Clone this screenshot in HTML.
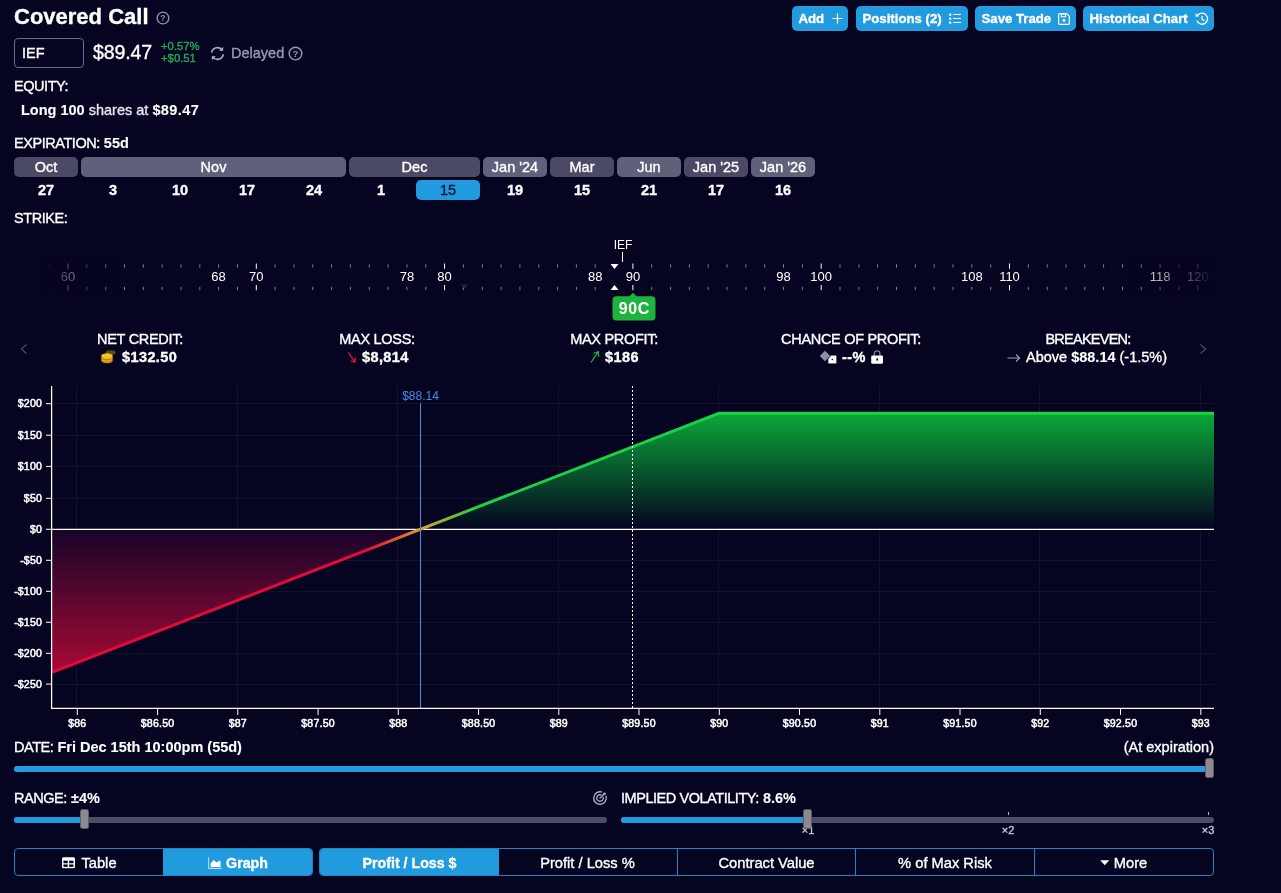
<!DOCTYPE html>
<html lang="en"><head><meta charset="utf-8"><title>Covered Call</title>
<style>
html,body{margin:0;padding:0;background:#050421;}
body{width:1281px;height:893px;position:relative;overflow:hidden;font-family:"Liberation Sans",sans-serif;color:#fff;font-size:14px;-webkit-text-stroke:0.35px currentColor;}
.t{position:absolute;white-space:nowrap;line-height:1;transform:translateY(-50%);margin-top:-1px}
.c{position:absolute;white-space:nowrap;line-height:1;transform:translate(-50%,-50%);text-align:center;margin-top:-1px}
.cap{letter-spacing:-0.45px}
.r{position:absolute;white-space:nowrap;line-height:1;transform:translate(-100%,-50%);margin-top:-1px}
b{font-weight:700;-webkit-text-stroke:0.1px currentColor}
.btn{position:absolute;top:6px;height:25px;background:#219ade;border-radius:5px;box-sizing:border-box;}
.btn span{position:absolute;left:6.5px;top:12.5px;transform:translateY(-50%);font-weight:700;font-size:13.2px;line-height:1;white-space:nowrap;}
.btn svg{position:absolute;top:5px;}
.pill{position:absolute;top:157px;height:19.700px;background:#5f6079;border-radius:5px;}
.pill.dk{background:#4a4a64}
.pill span{position:absolute;left:50%;top:9.5px;transform:translate(-50%,-50%);font-size:14.5px;line-height:1;white-space:nowrap;}
.d{position:absolute;top:189.5px;transform:translate(-50%,-50%);font-weight:700;font-size:14.5px;line-height:1;}
.abs{position:absolute;}
.seg{position:absolute;top:0;height:26px;box-sizing:border-box;}
.seg span{position:absolute;left:50%;top:13.500px;transform:translate(-50%,-50%);font-size:14.700px;line-height:1;white-space:nowrap;}
.seg.on{background:#219ade;}
.seg.on span{font-weight:700;font-size:14.200px}
.grp{position:absolute;top:848px;height:28px;border:1px solid #1e84c2;border-radius:4px;box-sizing:border-box;overflow:hidden;}
</style></head><body><div id="app" style="position:absolute;left:0;top:0;width:1281px;height:893px;will-change:transform">

<div class="t" style="left:14px;top:17.5px;font-size:22px;font-weight:700;letter-spacing:0">Covered Call</div>
<svg class="abs" style="left:156px;top:10.500px" width="14" height="14" viewBox="0 0 12 12"><circle cx="6" cy="6" r="5" fill="none" stroke="#8f90a6" stroke-width="1.2"/><text x="6" y="8.6" font-size="7.5" font-weight="700" text-anchor="middle" fill="#8f90a6" font-family="Liberation Sans, sans-serif">?</text></svg>
<div class="btn" style="left:792px;width:56px"><span>Add</span><svg style="left:38px" width="15" height="15" viewBox="0 0 15 15"><path d="M7.5 2.5v10M2.5 7.5h10" stroke="#fff" stroke-width="1.2" fill="none"/></svg></div>
<div class="btn" style="left:856px;width:112px"><span>Positions (2)</span><svg style="left:92px" width="15" height="15" viewBox="0 0 15 15"><path d="M5 3.5h8M5 7.5h8M5 11.5h8" stroke="#fff" stroke-width="1.2" fill="none"/><rect x="1" y="2.400" width="2.300" height="2.300" rx="0.600" fill="#fff"/><rect x="1" y="6.400" width="2.300" height="2.300" rx="0.600" fill="#fff"/><rect x="1" y="10.400" width="2.300" height="2.300" rx="0.600" fill="#fff"/></svg></div>
<div class="btn" style="left:975px;width:101px"><span>Save Trade</span><svg style="left:81px;top:4.700px" width="16" height="16" viewBox="0 0 15 15"><path d="M2.5 3.5a1 1 0 0 1 1-1h6.5l2.5 2.5v6.5a1 1 0 0 1-1 1h-8a1 1 0 0 1-1-1z" stroke="#fff" stroke-width="1.1" fill="none"/><rect x="5" y="2.8" width="4" height="2.6" fill="none" stroke="#fff" stroke-width="1"/><circle cx="7.5" cy="9" r="1.4" fill="#fff"/></svg></div>
<div class="btn" style="left:1083px;width:131px"><span>Historical Chart</span><svg style="left:110.500px;top:4.700px" width="16" height="16" viewBox="0 0 15 15"><path d="M3.2 4.2A5.2 5.2 0 1 1 2.6 9" stroke="#fff" stroke-width="1.2" fill="none"/><path d="M1.2 2.2l0.6 3.4 3.3-0.8z" fill="#fff"/><path d="M7.6 4.6v3.2l2.1 1.3" stroke="#fff" stroke-width="1.1" fill="none"/></svg></div>
<div class="abs" style="left:14px;top:38px;width:70px;height:30px;border:1px solid #6a6c88;border-radius:4px;box-sizing:border-box"></div>
<div class="t" style="left:22px;top:53.5px;font-size:14.5px">IEF</div>
<div class="t" style="left:93px;top:53.500px;font-size:19.600px;letter-spacing:-0.150px">$89.47</div>
<div class="t" style="left:161px;top:48px;font-size:11.3px;color:#25ab57">+0.57%</div>
<div class="t" style="left:161px;top:59.800px;font-size:11.3px;color:#25ab57">+$0.51</div>
<svg class="abs" style="left:208.500px;top:44.500px" width="17" height="17" viewBox="0 0 14 14"><path d="M2.200 6.200A4.900 4.900 0 0 1 11 4.200" stroke="#adaec6" stroke-width="1.300" fill="none"/><path d="M11.800 7.800A4.900 4.900 0 0 1 3 9.800" stroke="#adaec6" stroke-width="1.300" fill="none"/><path d="M11.700 1.400v3.400h-3.400z" fill="#adaec6"/><path d="M2.300 12.600v-3.400h3.400z" fill="#adaec6"/></svg>
<div class="t" style="left:231px;top:53.500px;font-size:14.500px;color:#9799b5">Delayed</div>
<svg class="abs" style="left:287.500px;top:45.700px" width="15" height="15" viewBox="0 0 14 14"><circle cx="7" cy="7" r="5.900" fill="none" stroke="#9799b5" stroke-width="1.300"/><text x="7" y="10" font-size="8.500" font-weight="700" text-anchor="middle" fill="#9799b5" font-family="Liberation Sans, sans-serif">?</text></svg>
<div class="t" style="left:14px;top:86.5px;font-size:14.5px;letter-spacing:-0.45px">EQUITY:</div>
<div class="t" style="left:21px;top:110.5px;font-size:14.5px"><b>Long 100</b> <span style="color:#e4e4ee">shares at</span> <b style="letter-spacing:0.4px">$89.47</b></div>
<div class="t" style="left:14px;top:143.5px;font-size:14.5px"><span class="cap">EXPIRATION:</span> <b>55d</b></div>
<div class="pill dk" style="left:14px;width:64px"><span>Oct</span></div>
<div class="pill" style="left:81px;width:265px"><span>Nov</span></div>
<div class="pill dk" style="left:349px;width:131px"><span>Dec</span></div>
<div class="pill" style="left:483px;width:64px"><span>Jan '24</span></div>
<div class="pill dk" style="left:550px;width:64px"><span>Mar</span></div>
<div class="pill" style="left:617px;width:64px"><span>Jun</span></div>
<div class="pill dk" style="left:684px;width:64px"><span>Jan '25</span></div>
<div class="pill" style="left:751px;width:64px"><span>Jan '26</span></div>
<div class="abs" style="left:416px;top:180px;width:64px;height:20px;background:#219ade;border-radius:5px"></div>
<div class="d" style="left:46.0px">27</div>
<div class="d" style="left:113.0px">3</div>
<div class="d" style="left:180.0px">10</div>
<div class="d" style="left:247.0px">17</div>
<div class="d" style="left:314.0px">24</div>
<div class="d" style="left:381.0px">1</div>
<div class="d" style="left:448.0px;font-weight:400;color:#0b1a3a">15</div>
<div class="d" style="left:515.0px">19</div>
<div class="d" style="left:582.0px">15</div>
<div class="d" style="left:649.0px">21</div>
<div class="d" style="left:716.0px">17</div>
<div class="d" style="left:783.0px">16</div>
<div class="t" style="left:14px;top:218.5px;font-size:14.5px;letter-spacing:-0.45px">STRIKE:</div>
<svg class="abs" style="left:0;top:230px" width="1281" height="100" viewBox="0 230 1281 100"><defs><linearGradient id="fade" x1="0" x2="1" y1="0" y2="0"><stop offset="0" stop-color="#050421" stop-opacity="1"/><stop offset="0.07" stop-color="#050421" stop-opacity="0"/><stop offset="0.93" stop-color="#050421" stop-opacity="0"/><stop offset="1" stop-color="#050421" stop-opacity="1"/></linearGradient></defs><path d="M49.2 264.300v3.400M49.2 286.800v3.400" stroke="#7c7c95" stroke-width="1"/><path d="M68.0 263.500v5.300M68.0 285v5.300" stroke="#fff" stroke-width="1"/><path d="M86.8 264.300v3.400M86.8 286.800v3.400" stroke="#7c7c95" stroke-width="1"/><path d="M105.7 264.300v3.400M105.7 286.800v3.400" stroke="#7c7c95" stroke-width="1"/><path d="M124.5 264.300v3.400M124.5 286.800v3.400" stroke="#7c7c95" stroke-width="1"/><path d="M143.3 264.300v3.400M143.3 286.800v3.400" stroke="#7c7c95" stroke-width="1"/><path d="M162.1 264.300v3.400M162.1 286.800v3.400" stroke="#7c7c95" stroke-width="1"/><path d="M181.0 264.300v3.400M181.0 286.800v3.400" stroke="#7c7c95" stroke-width="1"/><path d="M199.8 264.300v3.400M199.8 286.800v3.400" stroke="#7c7c95" stroke-width="1"/><path d="M218.6 264.300v3.400M218.6 286.800v3.400" stroke="#7c7c95" stroke-width="1"/><path d="M237.5 264.300v3.400M237.5 286.800v3.400" stroke="#7c7c95" stroke-width="1"/><path d="M256.3 263.500v5.300M256.3 285v5.300" stroke="#fff" stroke-width="1"/><path d="M275.1 264.300v3.400M275.1 286.800v3.400" stroke="#7c7c95" stroke-width="1"/><path d="M294.0 264.300v3.400M294.0 286.800v3.400" stroke="#7c7c95" stroke-width="1"/><path d="M312.8 264.300v3.400M312.8 286.800v3.400" stroke="#7c7c95" stroke-width="1"/><path d="M331.6 264.300v3.400M331.6 286.800v3.400" stroke="#7c7c95" stroke-width="1"/><path d="M350.4 264.300v3.400M350.4 286.800v3.400" stroke="#7c7c95" stroke-width="1"/><path d="M369.3 264.300v3.400M369.3 286.800v3.400" stroke="#7c7c95" stroke-width="1"/><path d="M388.1 264.300v3.400M388.1 286.800v3.400" stroke="#7c7c95" stroke-width="1"/><path d="M406.9 264.300v3.400M406.9 286.800v3.400" stroke="#7c7c95" stroke-width="1"/><path d="M425.8 264.300v3.400M425.8 286.800v3.400" stroke="#7c7c95" stroke-width="1"/><path d="M444.6 263.500v5.300M444.6 285v5.300" stroke="#fff" stroke-width="1"/><path d="M463.4 264.300v3.400M463.4 286.800v3.400" stroke="#7c7c95" stroke-width="1"/><path d="M482.3 264.300v3.400M482.3 286.800v3.400" stroke="#7c7c95" stroke-width="1"/><path d="M501.1 264.300v3.400M501.1 286.800v3.400" stroke="#7c7c95" stroke-width="1"/><path d="M519.9 264.300v3.400M519.9 286.800v3.400" stroke="#7c7c95" stroke-width="1"/><path d="M538.8 264.300v3.400M538.8 286.800v3.400" stroke="#7c7c95" stroke-width="1"/><path d="M557.6 264.300v3.400M557.6 286.800v3.400" stroke="#7c7c95" stroke-width="1"/><path d="M576.4 264.300v3.400M576.4 286.800v3.400" stroke="#7c7c95" stroke-width="1"/><path d="M595.2 264.300v3.400M595.2 286.800v3.400" stroke="#7c7c95" stroke-width="1"/><path d="M614.1 264.300v3.400M614.1 286.800v3.400" stroke="#7c7c95" stroke-width="1"/><path d="M632.9 263.500v5.300M632.9 285v5.300" stroke="#fff" stroke-width="1"/><path d="M651.7 264.300v3.400M651.7 286.800v3.400" stroke="#7c7c95" stroke-width="1"/><path d="M670.6 264.300v3.400M670.6 286.800v3.400" stroke="#7c7c95" stroke-width="1"/><path d="M689.4 264.300v3.400M689.4 286.800v3.400" stroke="#7c7c95" stroke-width="1"/><path d="M708.2 264.300v3.400M708.2 286.800v3.400" stroke="#7c7c95" stroke-width="1"/><path d="M727.0 264.300v3.400M727.0 286.800v3.400" stroke="#7c7c95" stroke-width="1"/><path d="M745.9 264.300v3.400M745.9 286.800v3.400" stroke="#7c7c95" stroke-width="1"/><path d="M764.7 264.300v3.400M764.7 286.800v3.400" stroke="#7c7c95" stroke-width="1"/><path d="M783.5 264.300v3.400M783.5 286.800v3.400" stroke="#7c7c95" stroke-width="1"/><path d="M802.4 264.300v3.400M802.4 286.800v3.400" stroke="#7c7c95" stroke-width="1"/><path d="M821.2 263.500v5.300M821.2 285v5.300" stroke="#fff" stroke-width="1"/><path d="M840.0 264.300v3.400M840.0 286.800v3.400" stroke="#7c7c95" stroke-width="1"/><path d="M858.9 264.300v3.400M858.9 286.800v3.400" stroke="#7c7c95" stroke-width="1"/><path d="M877.7 264.300v3.400M877.7 286.800v3.400" stroke="#7c7c95" stroke-width="1"/><path d="M896.5 264.300v3.400M896.5 286.800v3.400" stroke="#7c7c95" stroke-width="1"/><path d="M915.3 264.300v3.400M915.3 286.800v3.400" stroke="#7c7c95" stroke-width="1"/><path d="M934.2 264.300v3.400M934.2 286.800v3.400" stroke="#7c7c95" stroke-width="1"/><path d="M953.0 264.300v3.400M953.0 286.800v3.400" stroke="#7c7c95" stroke-width="1"/><path d="M971.8 264.300v3.400M971.8 286.800v3.400" stroke="#7c7c95" stroke-width="1"/><path d="M990.7 264.300v3.400M990.7 286.800v3.400" stroke="#7c7c95" stroke-width="1"/><path d="M1009.5 263.500v5.300M1009.5 285v5.300" stroke="#fff" stroke-width="1"/><path d="M1028.3 264.300v3.400M1028.3 286.800v3.400" stroke="#7c7c95" stroke-width="1"/><path d="M1047.2 264.300v3.400M1047.2 286.800v3.400" stroke="#7c7c95" stroke-width="1"/><path d="M1066.0 264.300v3.400M1066.0 286.800v3.400" stroke="#7c7c95" stroke-width="1"/><path d="M1084.8 264.300v3.400M1084.8 286.800v3.400" stroke="#7c7c95" stroke-width="1"/><path d="M1103.6 264.300v3.400M1103.6 286.800v3.400" stroke="#7c7c95" stroke-width="1"/><path d="M1122.5 264.300v3.400M1122.5 286.800v3.400" stroke="#7c7c95" stroke-width="1"/><path d="M1141.3 264.300v3.400M1141.3 286.800v3.400" stroke="#7c7c95" stroke-width="1"/><path d="M1160.1 264.300v3.400M1160.1 286.800v3.400" stroke="#7c7c95" stroke-width="1"/><path d="M1179.0 264.300v3.400M1179.0 286.800v3.400" stroke="#7c7c95" stroke-width="1"/><path d="M1197.8 263.500v5.300M1197.8 285v5.300" stroke="#fff" stroke-width="1"/><text x="68.0" y="281.300" font-size="13" text-anchor="middle" fill="#fff" font-family="Liberation Sans, sans-serif">60</text><text x="218.6" y="281.300" font-size="13" text-anchor="middle" fill="#fff" font-family="Liberation Sans, sans-serif">68</text><text x="256.3" y="281.300" font-size="13" text-anchor="middle" fill="#fff" font-family="Liberation Sans, sans-serif">70</text><text x="406.9" y="281.300" font-size="13" text-anchor="middle" fill="#fff" font-family="Liberation Sans, sans-serif">78</text><text x="444.6" y="281.300" font-size="13" text-anchor="middle" fill="#fff" font-family="Liberation Sans, sans-serif">80</text><text x="595.2" y="281.300" font-size="13" text-anchor="middle" fill="#fff" font-family="Liberation Sans, sans-serif">88</text><text x="632.9" y="281.300" font-size="13" text-anchor="middle" fill="#fff" font-family="Liberation Sans, sans-serif">90</text><text x="783.5" y="281.300" font-size="13" text-anchor="middle" fill="#fff" font-family="Liberation Sans, sans-serif">98</text><text x="821.2" y="281.300" font-size="13" text-anchor="middle" fill="#fff" font-family="Liberation Sans, sans-serif">100</text><text x="971.8" y="281.300" font-size="13" text-anchor="middle" fill="#fff" font-family="Liberation Sans, sans-serif">108</text><text x="1009.5" y="281.300" font-size="13" text-anchor="middle" fill="#fff" font-family="Liberation Sans, sans-serif">110</text><text x="1160.1" y="281.300" font-size="13" text-anchor="middle" fill="#fff" font-family="Liberation Sans, sans-serif">118</text><text x="1197.8" y="281.300" font-size="13" text-anchor="middle" fill="#fff" font-family="Liberation Sans, sans-serif">120</text><rect x="40" y="255" width="1175" height="42" fill="url(#fade)"/><path d="M461 284.500h7l-3.500 4.500z" fill="#26263f"/><text x="623" y="249" font-size="12" text-anchor="middle" fill="#fff" font-family="Liberation Sans, sans-serif">IEF</text><path d="M622.5 252v10" stroke="#fff" stroke-width="1"/><path d="M610.5 264h8l-4 5z" fill="#fff"/><path d="M610.5 290h8l-4 -5z" fill="#fff"/><path d="M616.500 296.300h13l3.500 -3.500 3.500 3.500h15a4 4 0 0 1 4 4v16.200a4 4 0 0 1 -4 4h-35a4 4 0 0 1 -4 -4v-16.200a4 4 0 0 1 4 -4z" fill="#1db33f"/><text x="634.300" y="313.800" font-size="16" letter-spacing="0.6" font-weight="700" text-anchor="middle" fill="#fff" font-family="Liberation Sans, sans-serif">90C</text></svg>
<svg class="abs" style="left:18px;top:342px" width="12" height="14" viewBox="0 0 12 14"><path d="M8.500 2.500L3.500 7l5 4.500" stroke="#45466a" stroke-width="1.3" fill="none"/></svg>
<svg class="abs" style="left:1197px;top:342px" width="12" height="14" viewBox="0 0 12 14"><path d="M3.500 2.500L8.500 7l-5 4.500" stroke="#45466a" stroke-width="1.3" fill="none"/></svg>
<div class="c" style="left:140px;top:340px;font-size:14.5px;letter-spacing:-0.3px">NET CREDIT:</div>
<div class="c" style="left:377px;top:340px;font-size:14.5px;letter-spacing:-0.3px">MAX LOSS:</div>
<div class="c" style="left:614px;top:340px;font-size:14.5px;letter-spacing:-0.3px">MAX PROFIT:</div>
<div class="c" style="left:851px;top:340px;font-size:14.5px;letter-spacing:-0.3px">CHANCE OF PROFIT:</div>
<div class="c" style="left:1088px;top:340px;font-size:14.5px;letter-spacing:-0.75px">BREAKEVEN:</div>
<div class="t" style="left:122px;top:357.5px;font-size:14.5px;font-weight:700;letter-spacing:0.4px">$132.50</div>
<svg class="abs" style="left:100px;top:349px" width="17" height="15" viewBox="0 0 17 15"><ellipse cx="10.700" cy="3.600" rx="5" ry="2.300" fill="#5a4c16"/><path d="M1.400 6.500v5.500a5.600 2.200 0 0 0 11.200 0v-5.500z" fill="#e8b71c"/><ellipse cx="7" cy="6.500" rx="5.600" ry="2.200" fill="#f2c524"/><path d="M1.400 8.600a5.600 2.200 0 0 0 11.200 0M1.400 10.900a5.600 2.200 0 0 0 11.200 0" stroke="#a8560e" stroke-width="0.700" fill="none"/></svg>
<div class="t" style="left:362px;top:357.5px;font-size:14.5px;font-weight:700;letter-spacing:0.4px">$8,814</div>
<svg class="abs" style="left:346px;top:351px" width="12" height="14" viewBox="0 0 12 14"><path d="M2.300 1.500L8.800 10.600M9.300 6.600l-0.300 4.300 -4.200 -0.800" stroke="#d9143c" stroke-width="1.300" fill="none"/></svg>
<div class="t" style="left:605px;top:357.5px;font-size:14.5px;font-weight:700;letter-spacing:0.4px">$186</div>
<svg class="abs" style="left:589px;top:350px" width="12" height="14" viewBox="0 0 12 14"><path d="M2 12.500L9 2M4.500 3.500l4.800 -1.800 0.300 5" stroke="#1db33f" stroke-width="1.3" fill="none"/></svg>
<div class="t" style="left:842px;top:357.5px;font-size:14.5px;font-weight:700;letter-spacing:0.4px">--%</div>
<svg class="abs" style="left:818px;top:350px" width="20" height="15" viewBox="0 0 20 15"><path d="M7 0.800l5.200 5.200 -5.200 5.200 -5.200 -5.200z" fill="#8e8fa8"/><path d="M13 5.200h4.700a1 1 0 0 1 1 1v6.600a1 1 0 0 1 -1 1h-6.700a1 1 0 0 1 -1 -1v-3.800z" fill="#fff" stroke="#050421" stroke-width="0.600"/><circle cx="14.300" cy="9.500" r="0.800" fill="#050421"/></svg>
<svg class="abs" style="left:870px;top:350px" width="14" height="15" viewBox="0 0 14 15"><path d="M4.300 6v-2.300a2.800 2.800 0 0 1 5.600 0v2.300" stroke="#7d7d98" stroke-width="1.300" fill="none"/><rect x="1.200" y="5.600" width="11.800" height="8.200" rx="1.300" fill="#fff"/><ellipse cx="7.200" cy="9.500" rx="0.900" ry="1.300" fill="#050421"/></svg>
<div class="t" style="left:1026px;top:357.5px;font-size:14.5px">Above <b>$88.14</b> (-1.5%)</div>
<svg class="abs" style="left:1006px;top:351px" width="16" height="14" viewBox="0 0 16 14"><path d="M1.500 7h12M10 3.500l3.500 3.500 -3.500 3.500" stroke="#9fa0b3" stroke-width="1.100" fill="none"/></svg>
<svg class="abs" style="left:0;top:380px" width="1281" height="360" viewBox="0 380 1281 360" font-family="Liberation Sans, sans-serif"><defs><linearGradient id="gg" x1="0" x2="0" y1="413.2" y2="529" gradientUnits="userSpaceOnUse"><stop offset="0" stop-color="#0aa838"/><stop offset="1" stop-color="#050421"/></linearGradient><linearGradient id="rg" x1="0" x2="0" y1="529" y2="691.3" gradientUnits="userSpaceOnUse"><stop offset="0" stop-color="#160428"/><stop offset="1" stop-color="#bb0a36"/></linearGradient><linearGradient id="lg" x1="366.2" x2="478.6" y1="0" y2="0" gradientUnits="userSpaceOnUse"><stop offset="0" stop-color="#e3093b"/><stop offset="0.5" stop-color="#d9a02a"/><stop offset="1" stop-color="#1ad148"/></linearGradient></defs><path d="M52 684.5H1214" stroke="#12122f" stroke-width="1"/><path d="M52 653.5H1214" stroke="#12122f" stroke-width="1"/><path d="M52 622.5H1214" stroke="#12122f" stroke-width="1"/><path d="M52 591.5H1214" stroke="#12122f" stroke-width="1"/><path d="M52 560.5H1214" stroke="#12122f" stroke-width="1"/><path d="M52 529.5H1214" stroke="#12122f" stroke-width="1"/><path d="M52 498.5H1214" stroke="#12122f" stroke-width="1"/><path d="M52 466.5H1214" stroke="#12122f" stroke-width="1"/><path d="M52 435.5H1214" stroke="#12122f" stroke-width="1"/><path d="M52 403.5H1214" stroke="#12122f" stroke-width="1"/><path d="M76.5 386V708" stroke="#12122f" stroke-width="1"/><path d="M237.5 386V708" stroke="#12122f" stroke-width="1"/><path d="M397.5 386V708" stroke="#12122f" stroke-width="1"/><path d="M558.5 386V708" stroke="#12122f" stroke-width="1"/><path d="M718.5 386V708" stroke="#12122f" stroke-width="1"/><path d="M879.5 386V708" stroke="#12122f" stroke-width="1"/><path d="M1039.5 386V708" stroke="#12122f" stroke-width="1"/><path d="M1200.5 386V708" stroke="#12122f" stroke-width="1"/><path d="M420.8 529.0L420.8 529H1214V413.2H719.3z" fill="url(#gg)"/><path d="M52 529H420.8L52 672.3z" fill="url(#rg)"/><path d="M52 529.400H1214" stroke="#fff" stroke-width="1.200"/><path d="M52 672.3L719.3 413.2H1214" stroke="url(#lg)" stroke-width="3" fill="none" stroke-linejoin="round"/><path d="M420.500 403V708" stroke="#3f8fe6" stroke-width="1"/><text x="420.500" y="400" font-size="12" text-anchor="middle" fill="#3f8fe6">$88.14</text><path d="M632.500 386V708" stroke="#fff" stroke-width="1" stroke-dasharray="2 2"/><path d="M51.600 386V708.400H1214" stroke="#fff" stroke-width="1.250" fill="none"/><path d="M46 684.1H51.600" stroke="#fff" stroke-width="1"/><text x="42" y="687.8" font-size="10.600" letter-spacing="0.150" font-weight="400" stroke="#fff" stroke-width="0.500" text-anchor="end" fill="#fff">-$250</text><path d="M46 653.3H51.600" stroke="#fff" stroke-width="1"/><text x="42" y="657.0" font-size="10.600" letter-spacing="0.150" font-weight="400" stroke="#fff" stroke-width="0.500" text-anchor="end" fill="#fff">-$200</text><path d="M46 622.3H51.600" stroke="#fff" stroke-width="1"/><text x="42" y="626.0" font-size="10.600" letter-spacing="0.150" font-weight="400" stroke="#fff" stroke-width="0.500" text-anchor="end" fill="#fff">-$150</text><path d="M46 591.3H51.600" stroke="#fff" stroke-width="1"/><text x="42" y="595.0" font-size="10.600" letter-spacing="0.150" font-weight="400" stroke="#fff" stroke-width="0.500" text-anchor="end" fill="#fff">-$100</text><path d="M46 560.3H51.600" stroke="#fff" stroke-width="1"/><text x="42" y="564.0" font-size="10.600" letter-spacing="0.150" font-weight="400" stroke="#fff" stroke-width="0.500" text-anchor="end" fill="#fff">-$50</text><path d="M46 529.3H51.600" stroke="#fff" stroke-width="1"/><text x="42" y="533.0" font-size="10.600" letter-spacing="0.150" font-weight="400" stroke="#fff" stroke-width="0.500" text-anchor="end" fill="#fff">$0</text><path d="M46 498.3H51.600" stroke="#fff" stroke-width="1"/><text x="42" y="502.0" font-size="10.600" letter-spacing="0.150" font-weight="400" stroke="#fff" stroke-width="0.500" text-anchor="end" fill="#fff">$50</text><path d="M46 466.4H51.600" stroke="#fff" stroke-width="1"/><text x="42" y="470.1" font-size="10.600" letter-spacing="0.150" font-weight="400" stroke="#fff" stroke-width="0.500" text-anchor="end" fill="#fff">$100</text><path d="M46 435.2H51.600" stroke="#fff" stroke-width="1"/><text x="42" y="438.9" font-size="10.600" letter-spacing="0.150" font-weight="400" stroke="#fff" stroke-width="0.500" text-anchor="end" fill="#fff">$150</text><path d="M46 403.7H51.600" stroke="#fff" stroke-width="1"/><text x="42" y="407.4" font-size="10.600" letter-spacing="0.150" font-weight="400" stroke="#fff" stroke-width="0.500" text-anchor="end" fill="#fff">$200</text><path d="M77.3 708V715" stroke="#fff" stroke-width="1"/><text x="77.3" y="727.300" font-size="10.600" letter-spacing="0.200" font-weight="400" stroke="#fff" stroke-width="0.500" text-anchor="middle" fill="#fff">$86</text><path d="M157.6 708V715" stroke="#fff" stroke-width="1"/><text x="157.6" y="727.300" font-size="10.600" letter-spacing="0.200" font-weight="400" stroke="#fff" stroke-width="0.500" text-anchor="middle" fill="#fff">$86.50</text><path d="M237.8 708V715" stroke="#fff" stroke-width="1"/><text x="237.8" y="727.300" font-size="10.600" letter-spacing="0.200" font-weight="400" stroke="#fff" stroke-width="0.500" text-anchor="middle" fill="#fff">$87</text><path d="M318.1 708V715" stroke="#fff" stroke-width="1"/><text x="318.1" y="727.300" font-size="10.600" letter-spacing="0.200" font-weight="400" stroke="#fff" stroke-width="0.500" text-anchor="middle" fill="#fff">$87.50</text><path d="M398.3 708V715" stroke="#fff" stroke-width="1"/><text x="398.3" y="727.300" font-size="10.600" letter-spacing="0.200" font-weight="400" stroke="#fff" stroke-width="0.500" text-anchor="middle" fill="#fff">$88</text><path d="M478.6 708V715" stroke="#fff" stroke-width="1"/><text x="478.6" y="727.300" font-size="10.600" letter-spacing="0.200" font-weight="400" stroke="#fff" stroke-width="0.500" text-anchor="middle" fill="#fff">$88.50</text><path d="M558.8 708V715" stroke="#fff" stroke-width="1"/><text x="558.8" y="727.300" font-size="10.600" letter-spacing="0.200" font-weight="400" stroke="#fff" stroke-width="0.500" text-anchor="middle" fill="#fff">$89</text><path d="M639.0 708V715" stroke="#fff" stroke-width="1"/><text x="639.0" y="727.300" font-size="10.600" letter-spacing="0.200" font-weight="400" stroke="#fff" stroke-width="0.500" text-anchor="middle" fill="#fff">$89.50</text><path d="M719.3 708V715" stroke="#fff" stroke-width="1"/><text x="719.3" y="727.300" font-size="10.600" letter-spacing="0.200" font-weight="400" stroke="#fff" stroke-width="0.500" text-anchor="middle" fill="#fff">$90</text><path d="M799.5 708V715" stroke="#fff" stroke-width="1"/><text x="799.5" y="727.300" font-size="10.600" letter-spacing="0.200" font-weight="400" stroke="#fff" stroke-width="0.500" text-anchor="middle" fill="#fff">$90.50</text><path d="M879.8 708V715" stroke="#fff" stroke-width="1"/><text x="879.8" y="727.300" font-size="10.600" letter-spacing="0.200" font-weight="400" stroke="#fff" stroke-width="0.500" text-anchor="middle" fill="#fff">$91</text><path d="M960.0 708V715" stroke="#fff" stroke-width="1"/><text x="960.0" y="727.300" font-size="10.600" letter-spacing="0.200" font-weight="400" stroke="#fff" stroke-width="0.500" text-anchor="middle" fill="#fff">$91.50</text><path d="M1040.3 708V715" stroke="#fff" stroke-width="1"/><text x="1040.3" y="727.300" font-size="10.600" letter-spacing="0.200" font-weight="400" stroke="#fff" stroke-width="0.500" text-anchor="middle" fill="#fff">$92</text><path d="M1120.5 708V715" stroke="#fff" stroke-width="1"/><text x="1120.5" y="727.300" font-size="10.600" letter-spacing="0.200" font-weight="400" stroke="#fff" stroke-width="0.500" text-anchor="middle" fill="#fff">$92.50</text><path d="M1200.8 708V715" stroke="#fff" stroke-width="1"/><text x="1200.8" y="727.300" font-size="10.600" letter-spacing="0.200" font-weight="400" stroke="#fff" stroke-width="0.500" text-anchor="middle" fill="#fff">$93</text></svg>
<div class="t" style="left:14px;top:747.5px;font-size:14.5px"><span class="cap">DATE:</span> <b>Fri Dec 15th 10:00pm (55d)</b></div>
<div class="r" style="left:1214px;top:747.5px;font-size:14.5px">(At expiration)</div>
<div class="abs" style="left:14px;top:766px;width:1200px;height:6px;border-radius:3px;background:#4b4c66"></div>
<div class="abs" style="left:14px;top:766px;width:1195px;height:6px;border-radius:3px;background:#219ade"></div>
<div class="abs" style="left:1205.0px;top:757.5px;width:9px;height:20.500px;border-radius:2.500px;background:#8b8b8f;border:1px solid #5e5e63;box-sizing:border-box"></div>
<div class="t" style="left:14px;top:798.5px;font-size:14.5px"><span class="cap">RANGE:</span> <b>±4%</b></div>
<div class="abs" style="left:14px;top:817px;width:593px;height:6px;border-radius:3px;background:#4b4c66"></div>
<div class="abs" style="left:14px;top:817px;width:70px;height:6px;border-radius:3px;background:#219ade"></div>
<div class="abs" style="left:80.0px;top:808.5px;width:9px;height:20.500px;border-radius:2.500px;background:#8b8b8f;border:1px solid #5e5e63;box-sizing:border-box"></div>
<svg class="abs" style="left:592px;top:789.800px" width="16" height="16" viewBox="0 0 16 16"><g stroke="#a9aac4" stroke-width="1.400" fill="none" stroke-linecap="round"><path d="M9.630 1.910A6.300 6.300 0 1 0 14.090 6.370"/><path d="M9.130 4.900A3.300 3.300 0 1 0 11.250 7.430"/><path d="M8 8L12 4.200"/></g><circle cx="12.400" cy="3.800" r="1.400" fill="#a9aac4"/></svg>
<div class="t" style="left:621px;top:798.5px;font-size:14.5px"><span class="cap">IMPLIED VOLATILITY:</span> <b>8.6%</b></div>
<div class="abs" style="left:808px;top:812px;width:1px;height:3px;background:#b4b4c4"></div>
<div class="c" style="left:808px;top:831px;font-size:11px;color:#c8c8d4">×1</div>
<div class="abs" style="left:1008px;top:812px;width:1px;height:3px;background:#b4b4c4"></div>
<div class="c" style="left:1008px;top:831px;font-size:11px;color:#c8c8d4">×2</div>
<div class="abs" style="left:1208px;top:812px;width:1px;height:3px;background:#b4b4c4"></div>
<div class="c" style="left:1208px;top:831px;font-size:11px;color:#c8c8d4">×3</div>
<div class="abs" style="left:621px;top:817px;width:593px;height:6px;border-radius:3px;background:#4b4c66"></div>
<div class="abs" style="left:621px;top:817px;width:186px;height:6px;border-radius:3px;background:#219ade"></div>
<div class="abs" style="left:803.0px;top:808.5px;width:9px;height:20.500px;border-radius:2.500px;background:#8b8b8f;border:1px solid #5e5e63;box-sizing:border-box"></div>
<div class="grp" style="left:14px;width:299px"><div class="seg" style="left:0;width:148px"><span><svg width="14" height="12" viewBox="0 0 14 12" style="vertical-align:-1px;margin-right:6px"><rect x="0.500" y="0.500" width="13" height="11" rx="1.500" fill="#fff"/><rect x="2" y="4" width="4.300" height="2.600" fill="#050421"/><rect x="7.700" y="4" width="4.300" height="2.600" fill="#050421"/><rect x="2" y="7.800" width="4.300" height="2.400" fill="#050421"/><rect x="7.700" y="7.800" width="4.300" height="2.400" fill="#050421"/></svg>Table</span></div><div class="seg on" style="left:148px;width:150px"><span><svg width="14" height="12" viewBox="0 0 14 12" style="vertical-align:-1px;margin-right:4px"><path d="M0.500 0.500v11h13" stroke="#cfe8f8" stroke-width="1" fill="none"/><path d="M2.500 10V6.500l3 -3.500 3 2.500 3 -2 1 1V10z" fill="#fff"/></svg>Graph</span></div></div>
<div class="grp" style="left:319px;width:895px"><div class="seg on" style="left:0px;width:179px;"><span>Profit / Loss $</span></div><div class="seg" style="left:178px;width:179px;"><span>Profit / Loss %</span></div><div class="seg" style="left:357px;width:178px;border-left:1px solid #1e84c2;"><span>Contract Value</span></div><div class="seg" style="left:535px;width:179px;border-left:1px solid #1e84c2;"><span>% of Max Risk</span></div><div class="seg" style="left:714px;width:181px;border-left:1px solid #1e84c2;"><span><svg width="10" height="6" viewBox="0 0 10 6" style="vertical-align:2px;margin-right:4px;margin-left:-3px"><path d="M0.500 0.500h9l-4.500 5z" fill="#fff"/></svg>More</span></div></div>
</div></body></html>
